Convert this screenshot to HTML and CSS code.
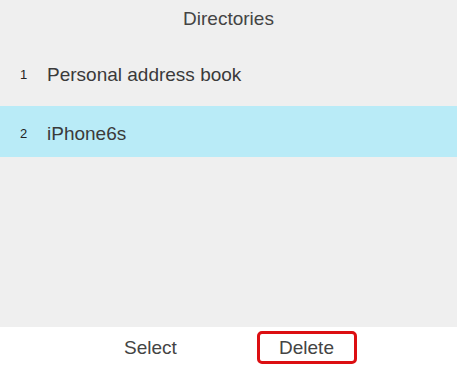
FILE: index.html
```html
<!DOCTYPE html>
<html>
<head>
<meta charset="utf-8">
<link rel="stylesheet" href="styles.css">
</head>
<body>
<div class="screen">
  <div class="main">
    <div class="title">Directories</div>
    <ul class="list">
      <li class="row"><span class="num">1</span><span class="label">Personal address book</span></li>
      <li class="row selected"><span class="num">2</span><span class="label">iPhone6s</span></li>
    </ul>
  </div>
  <div class="softkeys">
    <div class="key">Select</div>
    <div class="key"><span class="key-box">Delete</span></div>
  </div>
</div>
</body>
</html>
```
FILE: styles.css
```css
html, body {
  margin: 0;
  padding: 0;
  background: #ffffff;
}
body {
  font-family: "Liberation Sans", Arial, sans-serif;
  color: #3c3c3c;
}
.screen {
  width: 457px;
  height: 369px;
  display: flex;
  flex-direction: column;
}
.main {
  background: #efefef;
  height: 327px;
}
.title {
  height: 38px;
  line-height: 38px;
  text-align: center;
  font-size: 19px;
  color: #444;
}
.list {
  list-style: none;
  margin: 0;
  padding: 9px 0 0 0;
  display: flex;
  flex-direction: column;
  gap: 8px;
}
.row {
  height: 51px;
  display: flex;
  align-items: center;
  padding-top: 4px;
  box-sizing: border-box;
}
.row.selected {
  background: #b9ebf7;
}
.num {
  width: 47px;
  box-sizing: border-box;
  padding-left: 20px;
  font-size: 13px;
  color: #222;
}
.label {
  font-size: 19px;
  color: #3a3a3a;
}
.softkeys {
  flex: 1;
  display: flex;
  justify-content: center;
  align-items: flex-start;
  padding-top: 4px;
}
.key {
  width: 156px;
  height: 33px;
  line-height: 33px;
  text-align: center;
  font-size: 19px;
  color: #444;
}
.key-box {
  display: inline-block;
  vertical-align: top;
  box-sizing: border-box;
  width: 100px;
  height: 33px;
  line-height: 27px;
  border: 3px solid #dc0f12;
  border-radius: 5px;
}
```
